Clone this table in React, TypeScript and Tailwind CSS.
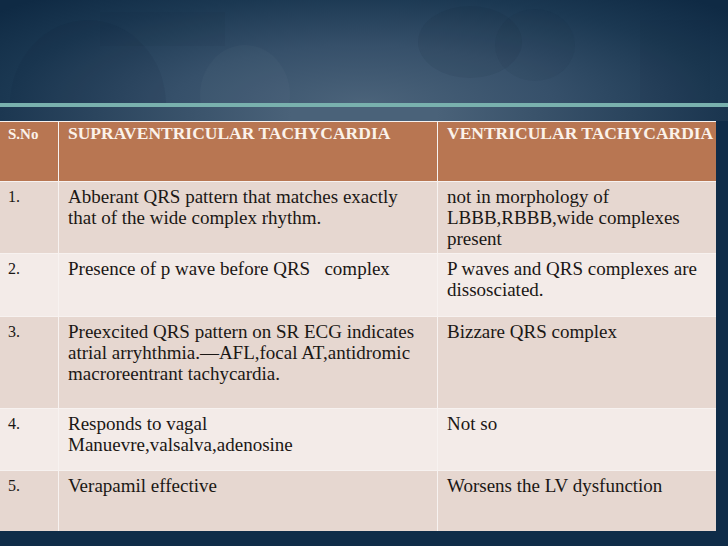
const rows = [
  {
    no: '1.',
    svt: ['Abberant QRS pattern that matches exactly', 'that of the wide complex rhythm.'],
    vt: ['not in morphology of', 'LBBB,RBBB,wide complexes', 'present'],
    h: 'h-[71px]',
    bg: 'bg-[#e6d7d0]',
  },
  {
    no: '2.',
    svt: ['Presence of p wave before QRS \u00a0\u00a0complex'],
    vt: ['P waves and QRS complexes are', 'dissosciated.'],
    h: 'h-[62px]',
    bg: 'bg-[#f3ebe8]',
  },
  {
    no: '3.',
    svt: [
      'Preexcited QRS pattern on SR ECG indicates',
      'atrial arryhthmia.\u2014AFL,focal AT,antidromic',
      'macroreentrant tachycardia.',
    ],
    vt: ['Bizzare QRS complex'],
    h: 'h-[91px]',
    bg: 'bg-[#e6d7d0]',
  },
  {
    no: '4.',
    svt: ['Responds to vagal', 'Manuevre,valsalva,adenosine'],
    vt: ['Not so'],
    h: 'h-[61px]',
    bg: 'bg-[#f3ebe8]',
  },
  {
    no: '5.',
    svt: ['Verapamil effective'],
    vt: ['Worsens the LV dysfunction'],
    h: 'h-[60px]',
    bg: 'bg-[#e6d7d0]',
  },
];

function Lines({ lines }: { lines: string[] }) {
  return (
    <>
      {lines.map((l) => (
        <div key={l} className="whitespace-pre">
          {l}
        </div>
      ))}
    </>
  );
}

export default function App() {
  return (
    <div className="w-[728px] h-[546px] overflow-hidden bg-[#0f2c48] font-['Liberation_Serif',serif]">
      {/* slide title band */}
      <div className="relative h-[103px] bg-[radial-gradient(ellipse_65%_140%_at_50%_100%,#4b637a_0%,#36506a_40%,#1b3852_75%,#0f2a44_100%)]">
        <svg className="absolute inset-0" width="728" height="103" viewBox="0 0 728 103">
          <ellipse cx="88" cy="105" rx="78" ry="85" fill="#0a1c2e" opacity="0.08" />
          <rect x="100" y="12" width="125" height="34" fill="#0a1c2e" opacity="0.06" />
          <ellipse cx="245" cy="95" rx="45" ry="50" fill="#ffffff" opacity="0.025" />
          <ellipse cx="470" cy="42" rx="52" ry="36" fill="#0a1c2e" opacity="0.07" />
          <ellipse cx="535" cy="45" rx="40" ry="36" fill="#0a1c2e" opacity="0.06" />
          <rect x="640" y="20" width="70" height="83" fill="#0a1c2e" opacity="0.05" />
        </svg>
      </div>
      <div className="h-[4px] bg-[#79b1ae]" />
      <div className="h-[14px] bg-[linear-gradient(to_right,#1c3751,#4a6279_40%,#4a6279_60%,#1a354f)]" />

      {/* comparison table */}
      <div className="w-[716px] grid grid-cols-[58px_378px_278px] gap-px bg-[#f7f2f0] pt-px pr-px text-[19px] leading-[21px] text-[#1b1715]">
        <div className="h-[59px] bg-[#b87652] pl-[8px] pt-[2px] text-[15px] font-bold text-[#fbf2ea]">S.No</div>
        <div className="h-[59px] bg-[#b87652] pl-[9px] pt-[1px] text-[17.5px] font-bold text-[#fbf2ea]">
          SUPRAVENTRICULAR TACHYCARDIA
        </div>
        <div className="h-[59px] bg-[#b87652] pl-[9px] pt-[1px] text-[17.5px] font-bold text-[#fbf2ea]">
          VENTRICULAR TACHYCARDIA
        </div>

        {rows.map((r) => (
          <div key={r.no} className="contents">
            <div className={`${r.h} ${r.bg} pl-[8px] pt-[4px] text-[16px]`}>{r.no}</div>
            <div className={`${r.h} ${r.bg} pl-[9px] pt-[4px]`}>
              <Lines lines={r.svt} />
            </div>
            <div className={`${r.h} ${r.bg} pl-[9px] pt-[4px]`}>
              <Lines lines={r.vt} />
            </div>
          </div>
        ))}
      </div>
    </div>
  );
}
